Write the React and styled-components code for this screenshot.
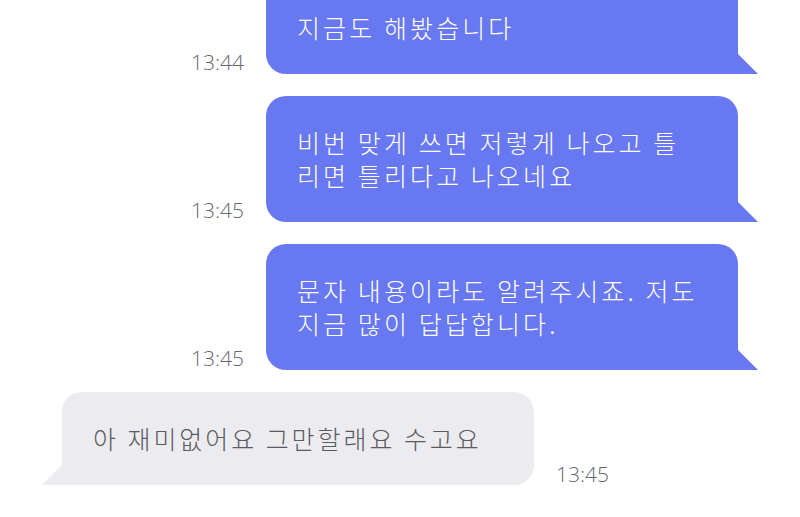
import React from "react";
import styled, { createGlobalStyle } from "styled-components";

const GlobalStyle = createGlobalStyle`
  html, body { margin: 0; padding: 0; background: #ffffff; }
  body { font-family: "Noto Sans CJK KR", "Noto Sans", sans-serif; }
`;

const Screen = styled.div`
  width: 800px;
  height: 517px;
  overflow: hidden;
  background: #ffffff;
`;

const Thread = styled.div`
  display: flex;
  flex-direction: column;
  gap: 22px;
  margin-top: -19px;
`;

const Row = styled.div`
  display: flex;
  flex-direction: ${(p) => (p.$mine ? "row-reverse" : "row")};
  align-items: flex-end;
  justify-content: flex-start;
  gap: 22px;
  padding: ${(p) => (p.$mine ? "0 62px 0 0" : "0 0 0 62px")};
`;

const Bubble = styled.div`
  position: relative;
  box-sizing: border-box;
  width: 472px;
  padding: 30px 32px 30px 31px;
  border-radius: 20px;
  border-bottom-right-radius: ${(p) => (p.$mine ? "0" : "20px")};
  border-bottom-left-radius: ${(p) => (p.$mine ? "20px" : "0")};
  background: ${(p) => (p.$mine ? "#6878f1" : "#ebebf0")};
  color: ${(p) => (p.$mine ? "#ffffff" : "#5a5a60")};
  font-family: "Noto Sans CJK KR", sans-serif;
  font-weight: 300;
  font-size: 25px;
  line-height: 33px;
  letter-spacing: ${(p) => (p.$mine ? "3.1px" : "2.95px")};

  &::after {
    content: "";
    position: absolute;
    bottom: 0;
    width: 20px;
    height: 20px;
    background: inherit;
    ${(p) =>
      p.$mine
        ? "left: 100%; clip-path: polygon(0 0, 100% 100%, 0 100%);"
        : "right: 100%; clip-path: polygon(100% 0, 100% 100%, 0 100%);"}
  }
`;

const Line = styled.div`
  white-space: nowrap;
`;

const Time = styled.span`
  font-family: "Open Sans", "Noto Sans", sans-serif;
  font-weight: 300;
  font-size: 21px;
  line-height: 22px;
  color: #666670;
  padding-bottom: ${(p) => (p.$mine ? "1px" : "0")};
`;

const messages = [
  { mine: true, time: "13:44", lines: ["지금도 해봤습니다"] },
  {
    mine: true,
    time: "13:45",
    lines: ["비번 맞게 쓰면 저렇게 나오고 틀", "리면 틀리다고 나오네요"],
  },
  {
    mine: true,
    time: "13:45",
    lines: ["문자 내용이라도 알려주시죠. 저도", "지금 많이 답답합니다."],
  },
  { mine: false, time: "13:45", lines: ["아 재미없어요 그만할래요 수고요"] },
];

export default function App() {
  return (
    <Screen>
      <GlobalStyle />
      <Thread>
        {messages.map((m, i) => (
          <Row key={i} $mine={m.mine}>
            <Bubble $mine={m.mine}>
              {m.lines.map((l, j) => (
                <Line key={j}>{l}</Line>
              ))}
            </Bubble>
            <Time $mine={m.mine}>{m.time}</Time>
          </Row>
        ))}
      </Thread>
    </Screen>
  );
}
